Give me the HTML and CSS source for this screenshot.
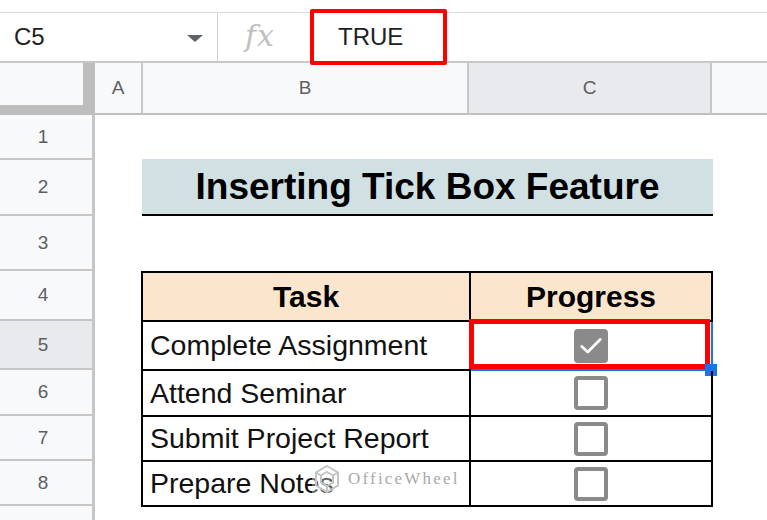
FILE: index.html
```html
<!DOCTYPE html>
<html lang="en">
<head>
  <meta charset="UTF-8" />
  <title>Inserting Tick Box Feature</title>
  <link rel="stylesheet" href="styles.css">
</head>
<body>

<!-- Строка формул -->
<div class="formula-bar">
  <div class="name-box">
    <span>C5</span>
    <span class="caret"></span>
  </div>
  <div class="fx">fx</div>
  <div class="formula">
    <span class="formula-value">TRUE</span>
  </div>
</div>

<!-- Лист -->
<div class="sheet">
  <div class="corner"><div class="corner-inner"></div></div>
  <div class="col-head">A</div>
  <div class="col-head">B</div>
  <div class="col-head selected">C</div>
  <div class="col-head last"></div>

  <div class="row-head" style="grid-row: 2;">1</div>
  <div class="row-head" style="grid-row: 3;">2</div>
  <div class="row-head" style="grid-row: 4;">3</div>
  <div class="row-head" style="grid-row: 5;">4</div>
  <div class="row-head selected" style="grid-row: 6;">5</div>
  <div class="row-head" style="grid-row: 7;">6</div>
  <div class="row-head" style="grid-row: 8;">7</div>
  <div class="row-head" style="grid-row: 9;">8</div>
  <div class="row-head" style="grid-row: 10;">9</div>

  <div class="title">Inserting Tick Box Feature</div>

  <div class="task-table">
    <div class="th">Task</div>
    <div class="th">Progress</div>

    <div class="td">Complete Assignment</div>
    <div class="td box-cell active">
      <span class="tick checked">
        <svg viewBox="0 0 24 24" width="26" height="26"><path d="M3.5 12.5l5.5 5 11.5-11.5" fill="none" stroke="#fff" stroke-width="2.6" stroke-linecap="round" stroke-linejoin="round"/></svg>
      </span>
      <span class="red-frame"></span>
      <span class="handle"></span>
    </div>

    <div class="td">Attend Seminar</div>
    <div class="td box-cell"><span class="tick"></span></div>

    <div class="td">Submit Project Report</div>
    <div class="td box-cell"><span class="tick"></span></div>

    <div class="td">Prepare Notes</div>
    <div class="td box-cell"><span class="tick"></span></div>
  </div>
</div>

<!-- Водяной знак -->
<div class="watermark">
  <svg viewBox="0 0 30 30" width="30" height="30">
    <path d="M15 2l11 6.5v13L15 28 4 21.5v-13z" fill="none" stroke="#c4c4c4" stroke-width="2"/>
    <path d="M15 8l6 3.5v7L15 22l-6-3.5v-7z" fill="none" stroke="#c4c4c4" stroke-width="2"/>
    <path d="M4 8.5l5 3M26 8.5l-5 3M15 22v6" stroke="#c4c4c4" stroke-width="2"/>
  </svg>
  <span>OfficeWheel</span>
</div>

</body>
</html>
```

FILE: styles.css
```css
body {
  margin: 0;
  padding-top: 12px;
  background-color: #ffffff;
  font-family: "Liberation Sans", Arial, sans-serif;
  color: #000;
  position: relative;
  overflow: hidden;
  height: 520px;
  box-sizing: border-box;
}

/* строка формул */
.formula-bar {
  position: relative;
  display: flex;
  align-items: center;
  height: 51px;
  box-sizing: border-box;
  border-top: 1px solid #dadce0;
  border-bottom: 2px solid #c8c8c8;
}
.name-box {
  width: 218px;
  height: 100%;
  box-sizing: border-box;
  display: flex;
  align-items: center;
  justify-content: space-between;
  padding: 0 14px 0 14px;
  font-size: 24px;
  color: #202124;
  border-right: 1px solid #d0d0d0;
}
.caret {
  width: 0;
  height: 0;
  border-left: 8px solid transparent;
  border-right: 8px solid transparent;
  border-top: 7px solid #5f6368;
  margin-top: 2px;
}
.fx {
  width: 92px;
  padding-left: 27px;
  box-sizing: border-box;
  font-family: "DejaVu Serif", "Liberation Serif", serif;
  font-style: italic;
  font-size: 30px;
  color: #c0c0c0;
  letter-spacing: 1px;
  margin-top: -4px;
}
.formula {
  flex: 1;
  height: 100%;
  position: relative;
}
.formula-value {
  position: absolute;
  left: 0;
  top: -4px;
  width: 137px;
  height: 56px;
  box-sizing: border-box;
  border: 4px solid #ff0000;
  border-radius: 2px;
  background: #fff;
  padding-left: 24px;
  font-size: 24px;
  line-height: 48px;
  color: #202124;
}

/* сетка листа */
.sheet {
  display: grid;
  grid-template-columns: 95px 48px 326px 243px 1fr;
  grid-template-rows: 52px 45px 56px 55px 50px 49px 46px 45px 45px 45px;
}
.corner {
  grid-column: 1;
  grid-row: 1;
  background-color: #bdbdbd;
}
.corner-inner {
  width: 83px;
  height: 42px;
  background-color: #f8f9fa;
}
.col-head {
  grid-row: 1;
  background-color: #f8f9fa;
  border-right: 2px solid #c6c6c6;
  border-bottom: 2px solid #c0c0c0;
  display: flex;
  align-items: center;
  justify-content: center;
  font-size: 19px;
  color: #5f5f5f;
}
.col-head.last {
  border-right: none;
}
.col-head.selected,
.row-head.selected {
  background-color: #e8eaed;
}
.row-head {
  grid-column: 1;
  background-color: #f8f9fa;
  border-right: 3px solid #c6c6c6;
  border-bottom: 2px solid #c6c6c6;
  display: flex;
  align-items: center;
  justify-content: center;
  font-size: 19px;
  color: #5f5f5f;
  padding-right: 6px;
}

/* заголовок */
.title {
  grid-column: 3 / 5;
  grid-row: 3;
  margin-left: -1px;
  margin-top: -1px;
  margin-right: -1px;
  background-color: #d0e0e3;
  border-bottom: 2px solid #000;
  display: flex;
  align-items: center;
  justify-content: center;
  font-weight: bold;
  font-size: 37px;
  color: #000;
}

/* таблица задач */
.task-table {
  grid-column: 3 / 5;
  grid-row: 5 / 10;
  margin-left: -2px;
  margin-right: -1px;
  display: grid;
  grid-template-columns: 328px 1fr;
  grid-template-rows: 49px 49px 46px 45px 45px;
  border-top: 2px solid #000;
  border-left: 2px solid #000;
  align-self: start;
}
.th,
.td {
  border-right: 2px solid #000;
  border-bottom: 2px solid #000;
  display: flex;
  align-items: center;
}
.th {
  background-color: #fce5cd;
  justify-content: center;
  font-weight: bold;
  font-size: 30px;
}
.td {
  font-size: 28.5px;
  color: #111;
  padding-left: 7px;
  box-sizing: border-box;
  white-space: nowrap;
}
.box-cell {
  justify-content: center;
  padding-left: 0;
  position: relative;
}
.tick {
  width: 34px;
  height: 34px;
  box-sizing: border-box;
  border: 4px solid #8a8a8a;
  border-radius: 4px;
  display: flex;
  align-items: center;
  justify-content: center;
}
.tick.checked {
  background-color: #8a8a8a;
}

/* выделение ячейки */
.box-cell.active {
  border-right-color: #1a73e8;
  border-bottom-color: #1a73e8;
}
.red-frame {
  position: absolute;
  left: -2px;
  top: -3px;
  right: 1px;
  bottom: 0;
  border: 5px solid #ff0000;
}
.handle {
  position: absolute;
  right: -6px;
  bottom: -7px;
  width: 12px;
  height: 12px;
  background-color: #1a73e8;
}

/* водяной знак */
.watermark {
  position: absolute;
  left: 312px;
  top: 464px;
  display: flex;
  align-items: center;
  gap: 6px;
  background: rgba(255, 255, 255, 0.35);
  padding-right: 4px;
}
.watermark span {
  font-family: "Liberation Serif", serif;
  font-size: 17px;
  letter-spacing: 2.2px;
  color: #a9a9a9;
}
```
